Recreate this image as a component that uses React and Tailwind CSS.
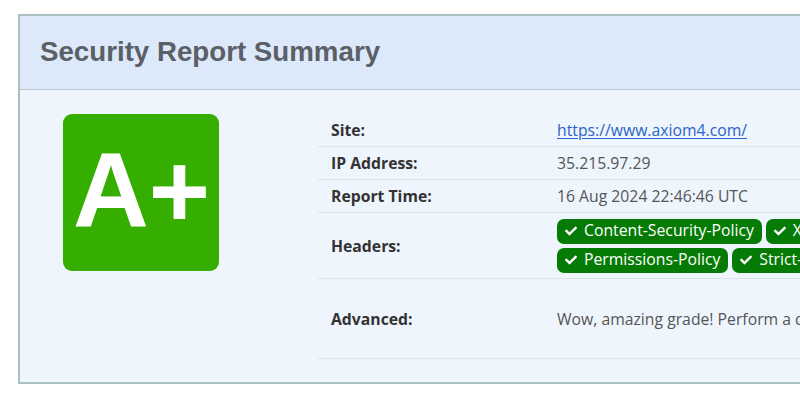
import React from "react";

const rows = [
  { label: "Site:", value: <a href="#" className="text-[#2a63c9] underline underline-offset-2">https://www.axiom4.com/</a> },
  { label: "IP Address:", value: "35.215.97.29" },
  { label: "Report Time:", value: "16 Aug 2024 22:46:46 UTC" },
];

const headers = [
  ["Content-Security-Policy", "X-Frame-Options", "X-Content-Type-Options"],
  ["Permissions-Policy", "Strict-Transport-Security", "Referrer-Policy"],
];

const Check = () => (
  <svg width="12" height="12" viewBox="0 0 512 512" className="fill-white shrink-0">
    <path d="M173.9 439.4l-166.4-166.4c-10-10-10-26.2 0-36.2l36.2-36.2c10-10 26.2-10 36.2 0L192 312.7 432.1 72.6c10-10 26.2-10 36.2 0l36.2 36.2c10 10 10 26.2 0 36.2l-294.4 294.4c-10 10-26.2 10-36.2 0z" />
  </svg>
);

const Badge = ({ text }) => (
  <span className="flex items-center gap-[7px] h-[25px] px-[8px] rounded-[7px] bg-[#057b05] text-white text-[15.75px] whitespace-nowrap">
    <Check />
    {text}
  </span>
);

export default function App() {
  return (
    <div className="w-[800px] h-[400px] overflow-hidden bg-white pt-[14px] pl-[18px]" style={{ fontFamily: "'Open Sans', sans-serif" }}>
      <div className="w-[1000px] border-2 border-[#abc0c1] bg-[#eef5fd]">
        {/* header */}
        <div className="h-[74px] bg-[#dbe9fb] border-b border-[#b8c9cf] flex items-center pl-5">
          <h1 className="text-[27.7px] font-bold text-[#5c5f66] pb-[2px]" style={{ fontFamily: "'Liberation Sans', Arial, sans-serif" }}>
            Security Report Summary
          </h1>
        </div>

        {/* body */}
        <div className="flex pt-[23px] pb-[23px]">
          <div className="w-[298px] pl-[43px] pt-[1px] shrink-0">
            <div className="w-[156px] h-[157px] rounded-[9px] bg-[#35ae00] flex items-center justify-center">
              <span className="text-white font-bold text-[105px] leading-none pb-[4px] pl-[1px]" style={{ fontFamily: "'Liberation Sans', Arial, sans-serif" }}>
                A+
              </span>
            </div>
          </div>

          <div className="flex-1 pt-[1px]">
            {rows.map((r) => (
              <div key={r.label} className="flex items-center h-[33px] pt-[2px] border-b border-[#dae3ec]">
                <div className="w-[239px] pl-[13px] font-bold text-[15.75px] text-[#333]">{r.label}</div>
                <div className="text-[15.75px] text-[#555]">{r.value}</div>
              </div>
            ))}
            <div className="flex items-center h-[66px] border-b border-[#dae3ec]">
              <div className="w-[239px] pl-[13px] pt-[2px] font-bold text-[15.75px] text-[#333]">Headers:</div>
              <div className="flex flex-col gap-[4px]">
                {headers.map((line, i) => (
                  <div key={i} className="flex gap-[4px]">
                    {line.map((t) => (
                      <Badge key={t} text={t} />
                    ))}
                  </div>
                ))}
              </div>
            </div>
            <div className="flex items-center h-[80px] pt-[2px] border-b border-[#dae3ec]">
              <div className="w-[239px] pl-[13px] font-bold text-[15.75px] text-[#333]">Advanced:</div>
              <div className="text-[15.75px] text-[#555] whitespace-nowrap">
                Wow, amazing grade! Perform a deeper security analysis of your website and APIs:
              </div>
            </div>
          </div>
        </div>
      </div>
    </div>
  );
}
